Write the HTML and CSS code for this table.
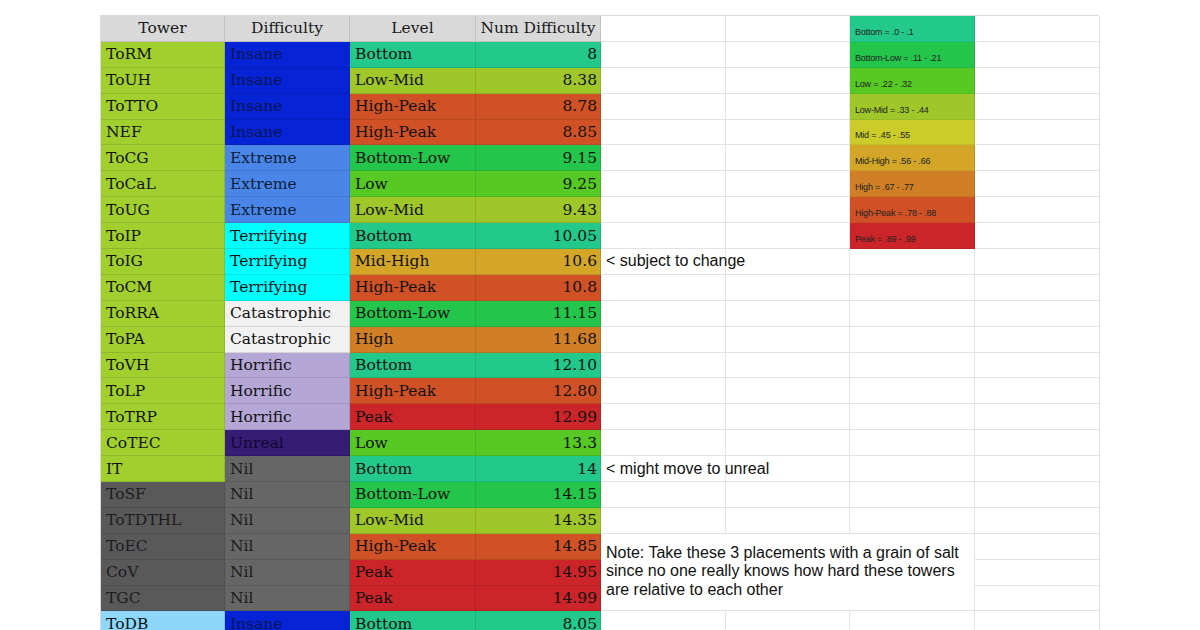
FILE: index.html
```html
<!DOCTYPE html>
<html>
<head>
<meta charset="utf-8">
<link rel="stylesheet" href="styles.css">
</head>
<body>
<div class="sheet">
  <!-- header -->
  <div class="c hd">Tower</div><div class="c hd">Difficulty</div><div class="c hd">Level</div><div class="c hd">Num Difficulty</div>
  <div class="c"></div><div class="c"></div><div class="c lg bottom">Bottom = .0 - .1</div><div class="c"></div>
  <!-- ToRM -->
  <div class="c tw">ToRM</div><div class="c insane">Insane</div><div class="c bottom">Bottom</div><div class="c num bottom">8</div>
  <div class="c"></div><div class="c"></div><div class="c lg bottomlow">Bottom-Low = .11 - .21</div><div class="c"></div>
  <!-- ToUH -->
  <div class="c tw">ToUH</div><div class="c insane">Insane</div><div class="c lowmid">Low-Mid</div><div class="c num lowmid">8.38</div>
  <div class="c"></div><div class="c"></div><div class="c lg low">Low = .22 - .32</div><div class="c"></div>
  <!-- ToTTO -->
  <div class="c tw">ToTTO</div><div class="c insane">Insane</div><div class="c highpeak">High-Peak</div><div class="c num highpeak">8.78</div>
  <div class="c"></div><div class="c"></div><div class="c lg lowmid">Low-Mid = .33 - .44</div><div class="c"></div>
  <!-- NEF -->
  <div class="c tw">NEF</div><div class="c insane">Insane</div><div class="c highpeak">High-Peak</div><div class="c num highpeak">8.85</div>
  <div class="c"></div><div class="c"></div><div class="c lg mid">Mid = .45 - .55</div><div class="c"></div>
  <!-- ToCG -->
  <div class="c tw">ToCG</div><div class="c extreme">Extreme</div><div class="c bottomlow">Bottom-Low</div><div class="c num bottomlow">9.15</div>
  <div class="c"></div><div class="c"></div><div class="c lg midhigh">Mid-High = .56 - .66</div><div class="c"></div>
  <!-- ToCaL -->
  <div class="c tw">ToCaL</div><div class="c extreme">Extreme</div><div class="c low">Low</div><div class="c num low">9.25</div>
  <div class="c"></div><div class="c"></div><div class="c lg high">High = .67 - .77</div><div class="c"></div>
  <!-- ToUG -->
  <div class="c tw">ToUG</div><div class="c extreme">Extreme</div><div class="c lowmid">Low-Mid</div><div class="c num lowmid">9.43</div>
  <div class="c"></div><div class="c"></div><div class="c lg highpeak">High-Peak = .78 - .88</div><div class="c"></div>
  <!-- ToIP -->
  <div class="c tw">ToIP</div><div class="c terrifying">Terrifying</div><div class="c bottom">Bottom</div><div class="c num bottom">10.05</div>
  <div class="c"></div><div class="c"></div><div class="c lg peak">Peak = .89 - .99</div><div class="c"></div>
  <!-- ToIG -->
  <div class="c tw">ToIG</div><div class="c terrifying">Terrifying</div><div class="c midhigh">Mid-High</div><div class="c num midhigh">10.6</div>
  <div class="c note1"><span class="over">&lt; subject to change</span></div><div class="c"></div><div class="c"></div><div class="c"></div>
  <!-- ToCM -->
  <div class="c tw">ToCM</div><div class="c terrifying">Terrifying</div><div class="c highpeak">High-Peak</div><div class="c num highpeak">10.8</div>
  <div class="c"></div><div class="c"></div><div class="c"></div><div class="c"></div>
  <!-- ToRRA -->
  <div class="c tw">ToRRA</div><div class="c catastrophic">Catastrophic</div><div class="c bottomlow">Bottom-Low</div><div class="c num bottomlow">11.15</div>
  <div class="c"></div><div class="c"></div><div class="c"></div><div class="c"></div>
  <!-- ToPA -->
  <div class="c tw">ToPA</div><div class="c catastrophic">Catastrophic</div><div class="c high">High</div><div class="c num high">11.68</div>
  <div class="c"></div><div class="c"></div><div class="c"></div><div class="c"></div>
  <!-- ToVH -->
  <div class="c tw">ToVH</div><div class="c horrific">Horrific</div><div class="c bottom">Bottom</div><div class="c num bottom">12.10</div>
  <div class="c"></div><div class="c"></div><div class="c"></div><div class="c"></div>
  <!-- ToLP -->
  <div class="c tw">ToLP</div><div class="c horrific">Horrific</div><div class="c highpeak">High-Peak</div><div class="c num highpeak">12.80</div>
  <div class="c"></div><div class="c"></div><div class="c"></div><div class="c"></div>
  <!-- ToTRP -->
  <div class="c tw">ToTRP</div><div class="c horrific">Horrific</div><div class="c peak">Peak</div><div class="c num peak">12.99</div>
  <div class="c"></div><div class="c"></div><div class="c"></div><div class="c"></div>
  <!-- CoTEC -->
  <div class="c tw">CoTEC</div><div class="c unreal">Unreal</div><div class="c low">Low</div><div class="c num low">13.3</div>
  <div class="c"></div><div class="c"></div><div class="c"></div><div class="c"></div>
  <!-- IT -->
  <div class="c tw">IT</div><div class="c nil">Nil</div><div class="c bottom">Bottom</div><div class="c num bottom">14</div>
  <div class="c note1"><span class="over">&lt; might move to unreal</span></div><div class="c"></div><div class="c"></div><div class="c"></div>
  <!-- ToSF -->
  <div class="c twnil">ToSF</div><div class="c nil">Nil</div><div class="c bottomlow">Bottom-Low</div><div class="c num bottomlow">14.15</div>
  <div class="c"></div><div class="c"></div><div class="c"></div><div class="c"></div>
  <!-- ToTDTHL -->
  <div class="c twnil">ToTDTHL</div><div class="c nil">Nil</div><div class="c lowmid">Low-Mid</div><div class="c num lowmid">14.35</div>
  <div class="c"></div><div class="c"></div><div class="c"></div><div class="c"></div>
  <!-- ToEC -->
  <div class="c twnil">ToEC</div><div class="c nil">Nil</div><div class="c highpeak">High-Peak</div><div class="c num highpeak">14.85</div>
  <div class="c merged">Note: Take these 3 placements with a grain of salt since no one really knows how hard these towers are relative to each other</div><div class="c"></div>
  <!-- CoV -->
  <div class="c twnil">CoV</div><div class="c nil">Nil</div><div class="c peak">Peak</div><div class="c num peak">14.95</div>
  <div class="c"></div>
  <!-- TGC -->
  <div class="c twnil">TGC</div><div class="c nil">Nil</div><div class="c peak">Peak</div><div class="c num peak">14.99</div>
  <div class="c"></div>
  <!-- ToDB -->
  <div class="c twblue">ToDB</div><div class="c insane">Insane</div><div class="c bottom">Bottom</div><div class="c num bottom">8.05</div>
  <div class="c"></div><div class="c"></div><div class="c"></div><div class="c"></div>
</div>
</body>
</html>
```

FILE: styles.css
```css
* { box-sizing: border-box; }
html, body { margin: 0; padding: 0; background: #ffffff; overflow: hidden; }
body { padding-top: 15px; }

.sheet {
  width: 999px;
  margin-left: 100px;
  display: grid;
  grid-template-columns: 124px 125px 126px 125px 125px 124px 125px 125px;
  grid-auto-rows: 25.9px;
  border-left: 1px solid #dcdcdc;
  border-top: 1px solid #dcdcdc;
  font-family: "DejaVu Serif", serif;
  font-size: 15.5px;
  color: #111111;
}

.c {
  border-right: 1px solid rgba(0, 0, 0, 0.11);
  border-bottom: 1px solid rgba(0, 0, 0, 0.11);
  padding: 0 5px;
  display: flex;
  align-items: center;
  white-space: nowrap;
  min-width: 0;
}

.hd { background: #d9d9d9; justify-content: center; color: #1a1a1a; }
.num { justify-content: flex-end; padding-right: 3px; }

.tw { background: #a1d02e; }
.twnil { background: #595959; color: #1c1c1c; }
.twblue { background: #8cd7fa; }

.insane { background: #0624d5; color: #081454; }
.extreme { background: #4a86e8; color: #0d1d3a; }
.terrifying { background: #00ffff; }
.catastrophic { background: #f1f1f1; }
.horrific { background: #b4a7d6; }
.unreal { background: #351c75; color: #120830; }
.nil { background: #666666; color: #1c1c1c; }

.bottom { background: #22c98a; }
.bottomlow { background: #23c64b; }
.low { background: #57c924; }
.lowmid { background: #a0c72a; }
.mid { background: #cbcc29; }
.midhigh { background: #d3a628; }
.high { background: #d17f26; }
.highpeak { background: #d05126; }
.peak { background: #cc2529; }

.lg {
  font-family: "Liberation Sans", Arial, sans-serif;
  font-size: 9px;
  letter-spacing: -0.2px;
  align-items: flex-end;
  padding-bottom: 4px;
  padding-left: 5px;
  color: #222;
  border-bottom: 1px solid rgba(0, 0, 0, 0.06);
}

.note1 { overflow: visible; position: relative; z-index: 1; }
.over {
  font-family: "Liberation Sans", Arial, sans-serif;
  font-size: 16px;
  color: #111;
}

.merged {
  grid-column: 5 / span 3;
  grid-row: 21 / span 3;
  white-space: normal;
  align-items: flex-start;
  padding: 10px 5px 0 5px;
  font-family: "Liberation Sans", Arial, sans-serif;
  font-size: 16px;
  line-height: 18.5px;
  color: #111;
  background: #ffffff;
}
```
